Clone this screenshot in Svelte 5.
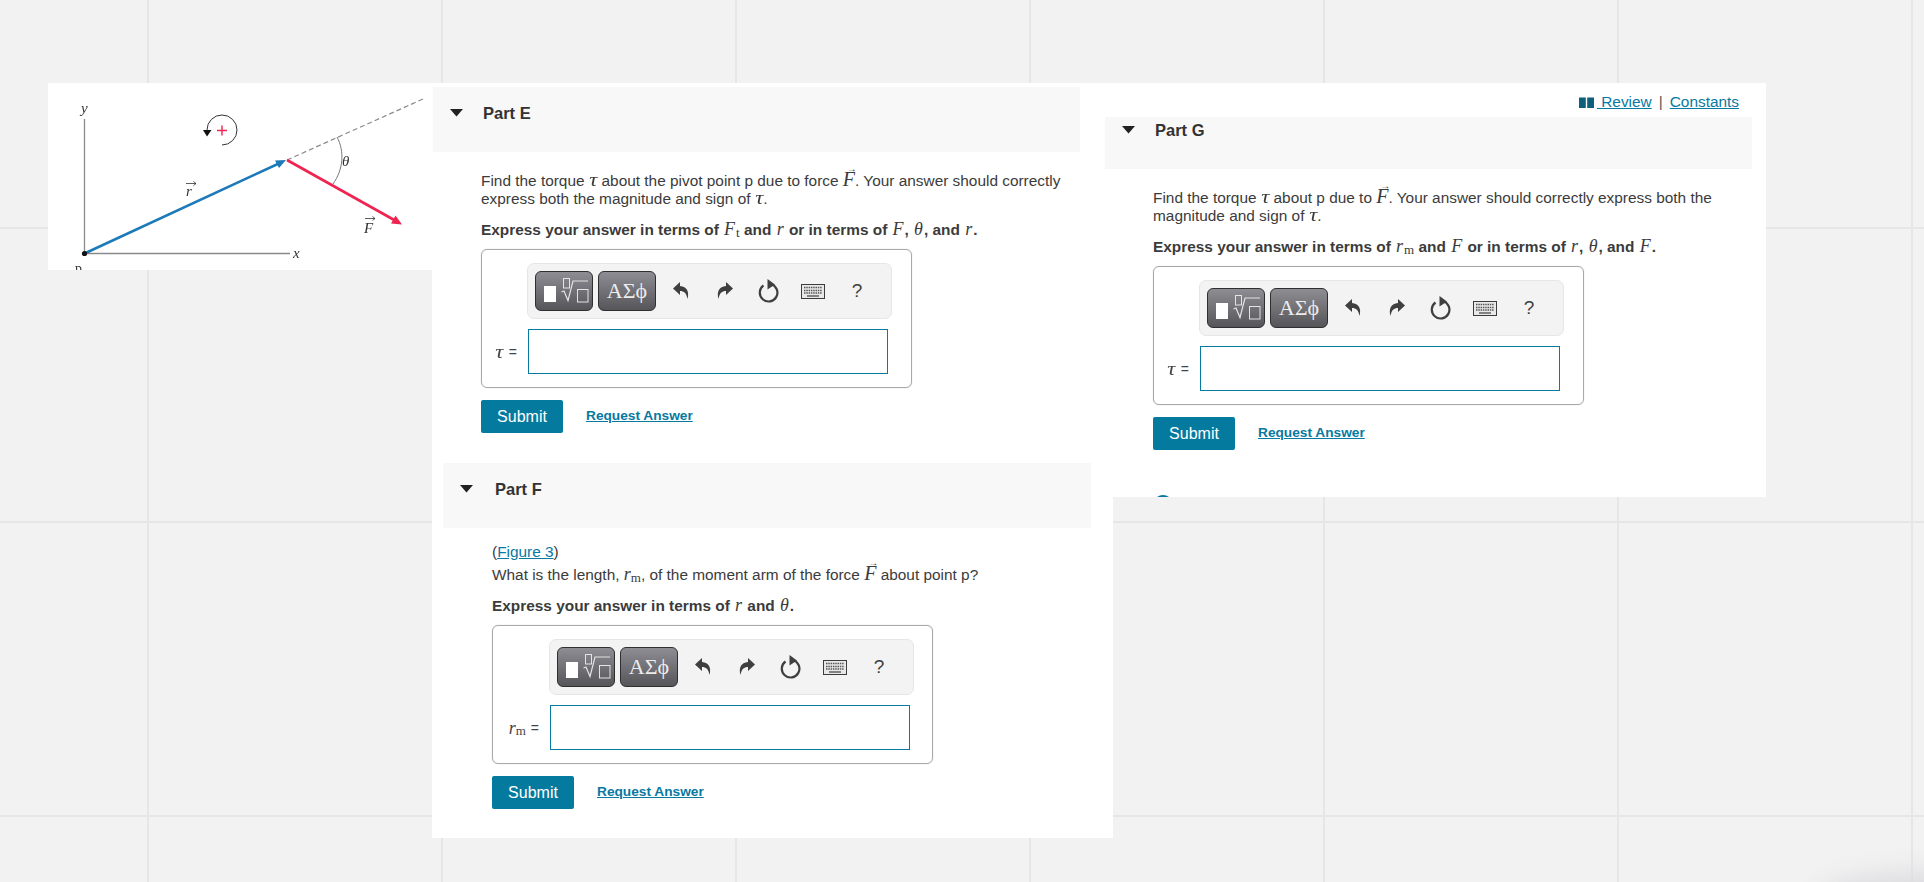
<script>
	const iconColor = '#3f3f3f';
</script>

{#snippet vecF()}<span class="vec"><i class="mi big">F</i></span>{/snippet}
{#snippet tau()}<i class="mi tau">τ</i>{/snippet}
{#snippet rm()}<i class="mi">r</i><span class="sub">m</span>{/snippet}

{#snippet toolbar()}
	<div class="toolbar">
		<button class="tool">
			<svg width="52" height="36" viewBox="0 0 52 36">
				<rect x="6" y="13" width="12" height="16" fill="#fff" />
				<rect x="25.500" y="5.500" width="6" height="9.500" fill="none" stroke="#e4e4e4" />
				<path d="M23.500 19l2.500 -1l4 9.500l5 -19.500h15" fill="none" stroke="#e4e4e4" stroke-width="1.200" />
				<rect x="39.500" y="16.500" width="10.500" height="12.500" fill="none" stroke="#e4e4e4" />
			</svg>
		</button>
		<button class="tool greek">ΑΣϕ</button>
		<span class="slot">
			<svg width="18" height="20" viewBox="0 0 18 20"><path d="M8 1L1 7.500L8 14V10C12 10 14.500 12 15.500 18C17.500 11 15 5.500 8 5Z" fill={iconColor} /></svg>
		</span>
		<span class="slot">
			<svg width="18" height="20" viewBox="0 0 18 20"><path d="M10 1L17 7.500L10 14V10C6 10 3.500 12 2.500 18C0.500 11 3 5.500 10 5Z" fill={iconColor} /></svg>
		</span>
		<span class="slot">
			<svg width="22" height="24" viewBox="0 0 22 24">
				<path d="M13 5.200A8.800 8.800 0 1 1 5.500 6.500" fill="none" stroke={iconColor} stroke-width="2.200" />
				<path d="M9.500 0L17 5.500L9.500 10.500Z" fill={iconColor} />
			</svg>
		</span>
		<span class="slot">
			<svg width="24" height="15" viewBox="0 0 24 15">
				<rect x="0.500" y="0.500" width="23" height="14" fill="#e8e8e8" stroke="#3c3c3c" />
				<path d="M3 3.500h18M3 6.500h18M3 9h18" stroke="#555" stroke-width="1.400" stroke-dasharray="1.500 0.800" />
				<path d="M6 12h12" stroke="#555" stroke-width="1.400" />
			</svg>
		</span>
		<span class="slot help">?</span>
	</div>
{/snippet}

{#snippet answer(label, wide)}
	<div class="answer" class:wide>
		<div></div>
		{@render toolbar()}
		<div class="label">{@render label()} <span class="eq">=</span></div>
		<div class="input"></div>
	</div>
{/snippet}

{#snippet actions()}
	<div class="actions">
		<button class="submit">Submit</button>
		<a class="request" href="#top">Request Answer</a>
	</div>
{/snippet}

{#snippet caret()}
	<svg class="caret" width="13" height="8" viewBox="0 0 13 8"><path d="M0 0H13L6.500 7.500Z" fill="#222" /></svg>
{/snippet}

<div class="canvas">
	<div class="figure">
		<svg width="384" height="187" viewBox="48 83 384 187">
			<path d="M84.500 119V253.500H290" fill="none" stroke="#8a8a8a" stroke-width="1.300" />
			<path d="M287 160L423 99" stroke="#8a8a8a" stroke-width="1.200" stroke-dasharray="5 3" />
			<path d="M337 137C345 152 343 170 333 184" fill="none" stroke="#777" stroke-width="1" />
			<path d="M84.500 253.500L281 162.500" stroke="#1c7ab8" stroke-width="2.600" />
			<path d="M286 160L275 160.500L279 168Z" fill="#1c7ab8" />
			<path d="M287 160L396 221" stroke="#ef2450" stroke-width="2.600" />
			<path d="M402 224.500L391 223.500L395.500 215.500Z" fill="#ef2450" />
			<circle cx="84.500" cy="253.500" r="2.600" fill="#111" />
			<path d="M222 145A15 15 0 1 0 207 130" fill="none" stroke="#333" stroke-width="1" />
			<path d="M203 130H211.500L207 136.500Z" fill="#111" />
			<path d="M222 125.500V135.500M217 130.500H227" stroke="#ef2450" stroke-width="1.400" />
			<g class="fig-text">
				<text x="81" y="113" font-size="15" font-style="italic">y</text>
				<text x="293" y="258" font-size="15" font-style="italic">x</text>
				<text x="75" y="273" font-size="14">p</text>
				<text x="342" y="166" font-size="15" font-style="italic">θ</text>
				<text x="186" y="196" font-size="15" font-style="italic">r</text>
				<path d="M186 183.500H196M193.500 181.500L196 183.500L193.500 185.500" fill="none" stroke="#333" stroke-width="0.800" />
				<text x="364" y="233" font-size="15" font-style="italic">F</text>
				<path d="M365 218.500H375M372.500 216.500L375 218.500L372.500 220.500" fill="none" stroke="#333" stroke-width="0.800" />
			</g>
		</svg>
	</div>

	<div class="window left-window">
		<section class="part part-e">
			<header class="part-head">{@render caret()}<span>Part E</span></header>
			<div class="part-body">
				<p>Find the torque {@render tau()} about the pivot point p due to force {@render vecF()}. Your answer should correctly express both the magnitude and sign of {@render tau()}.</p>
				<p class="instr">Express your answer in terms of <i class="mi">F</i><span class="sub">t</span> and <i class="mi">r</i> or in terms of <i class="mi">F</i>, <i class="mi">θ</i>, and <i class="mi">r</i>.</p>
				{@render answer(tau, false)}
				{@render actions()}
			</div>
		</section>

		<section class="part part-f">
			<header class="part-head">{@render caret()}<span>Part F</span></header>
			<div class="part-body">
				<p class="fig-line">(<a href="#top">Figure 3</a>)</p>
				<p>What is the length, {@render rm()}, of the moment arm of the force {@render vecF()} about point p?</p>
				<p class="instr">Express your answer in terms of <i class="mi">r</i> and <i class="mi">θ</i>.</p>
				{@render answer(rm, true)}
				{@render actions()}
			</div>
		</section>
	</div>

	<div class="window right-window">
		<nav class="links">
			<svg width="15" height="11" viewBox="0 0 15 11"><path d="M0 0.500H6.800V11H0ZM8.200 0.500H15V11H8.200Z" fill="#0d5f7c" /></svg>
			<a href="#top">&nbsp;Review</a><span class="bar">|</span><a href="#top">Constants</a>
		</nav>
		<section class="part part-g">
			<header class="part-head">{@render caret()}<span>Part G</span></header>
			<div class="part-body">
				<p>Find the torque {@render tau()} about p due to {@render vecF()}. Your answer should correctly express both the magnitude and sign of {@render tau()}.</p>
				<p class="instr">Express your answer in terms of {@render rm()} and <i class="mi">F</i> or in terms of <i class="mi">r</i>, <i class="mi">θ</i>, and <i class="mi">F</i>.</p>
				{@render answer(tau, false)}
				{@render actions()}
			</div>
		</section>
		<div class="cut-circle"></div>
	</div>

	<div class="smudge"></div>
</div>

<style>
	:global(body) {
		margin: 0;
		background: #f2f2f2;
	}

	.canvas {
		position: relative;
		height: 882px;
		overflow: hidden;
		background-color: #f2f2f2;
		background-image: linear-gradient(90deg, #e6e6e6 2px, transparent 2px), linear-gradient(#e6e6e6 2px, transparent 2px);
		background-size: 294px 294px;
		background-position: 147px 227px;
		font-family: 'Liberation Sans', Arial, sans-serif;
		font-size: 15.400px;
		color: #3b3b3b;
	}

	.figure {
		position: absolute;
		left: 48px;
		top: 83px;
		width: 384px;
		height: 187px;
		background: #fff;
		overflow: hidden;
	}

	.figure svg {
		display: block;
		filter: blur(0.35px);
	}

	.fig-text text {
		font-family: 'Liberation Serif', serif;
		fill: #333;
	}

	.window {
		position: absolute;
		background: #fff;
	}

	.left-window {
		left: 432px;
		top: 83px;
		width: 681px;
		height: 755px;
		padding-top: 4px;
		box-sizing: border-box;
	}

	.right-window {
		left: 1105px;
		top: 83px;
		width: 661px;
		height: 414px;
		overflow: hidden;
	}

	.links {
		display: flex;
		justify-content: flex-end;
		align-items: center;
		height: 34px;
		padding: 4px 27px 0 0;
		box-sizing: border-box;
	}

	.links svg {
		margin-right: 3px;
	}

	.links a,
	.fig-line a {
		color: #08799f;
	}

	.bar {
		margin: 0 7px;
		color: #555;
	}

	.part-e {
		margin-left: 1px;
		width: 647px;
	}

	.part-f {
		margin: 30px 0 0 11px;
		width: 648px;
	}

	.part-g {
		width: 647px;
	}

	.part-head {
		display: flex;
		align-items: flex-start;
		height: 65px;
		padding: 17px 0 0 17px;
		box-sizing: border-box;
		background: #f8f8f8;
		font-size: 16.500px;
		font-weight: 700;
		line-height: 18px;
		color: #333;
	}

	.part-g .part-head {
		height: 52px;
		padding-top: 4px;
	}

	.caret {
		margin: 5px 20px 0 0;
	}

	.part-f .caret {
		margin-right: 22px;
	}

	.part-body {
		padding: 20px 14px 0 48px;
	}

	.part-f .part-body {
		padding: 15px 14px 0 49px;
	}

	p {
		margin: 0;
		line-height: 18px;
	}

	.fig-line {
		margin-bottom: 5px;
	}

	.instr {
		margin-top: 13px;
		font-weight: 700;
	}

	.mi {
		font-family: 'Liberation Serif', serif;
		font-size: 18px;
		font-weight: 400;
		line-height: 0;
	}

	.instr .mi {
		margin: 0 1px;
	}

	.mi.big {
		font-size: 20px;
	}

	.tau {
		display: inline-block;
		transform: scaleX(1.25);
		margin: 0 1px;
	}

	.sub {
		font-family: 'Liberation Serif', serif;
		font-size: 13px;
		font-weight: 400;
		line-height: 0;
		vertical-align: -2px;
	}

	.vec {
		position: relative;
		line-height: 0;
	}

	.vec::before {
		content: '→';
		position: absolute;
		left: 4px;
		top: -8px;
		font-size: 10px;
		line-height: 10px;
		color: #333;
	}

	.answer {
		display: grid;
		grid-template-columns: 45px 1fr;
		grid-template-rows: 56px 45px;
		row-gap: 10px;
		margin-top: 10px;
		width: 431px;
		height: 139px;
		padding-top: 13px;
		border: 1px solid #a8a8a8;
		box-shadow: 0 0 1px #b8b8b8;
		border-radius: 6px;
		box-sizing: border-box;
	}

	.answer.wide {
		grid-template-columns: 56px 1fr;
		width: 441px;
	}

	.toolbar {
		display: flex;
		align-items: center;
		box-sizing: border-box;
		width: 365px;
		height: 56px;
		padding-left: 7px;
		background: #f3f3f3;
		border: 1px solid #e6e6e6;
		border-radius: 7px;
	}

	.tool {
		display: flex;
		align-items: center;
		justify-content: center;
		box-sizing: border-box;
		width: 58px;
		height: 40px;
		margin-right: 5px;
		padding: 0;
		background: linear-gradient(#8d8d93, #55555a);
		border: 1px solid #2f2f2f;
		border-radius: 6px;
	}

	.greek {
		margin-right: 3px;
		font-family: 'Liberation Serif', serif;
		font-size: 22px;
		color: #ececec;
	}

	.slot {
		display: flex;
		align-items: center;
		justify-content: center;
		width: 44px;
	}

	.help {
		font-size: 19px;
		color: #3f3f3f;
	}

	.label {
		display: flex;
		align-items: center;
		justify-content: flex-end;
		gap: 5px;
		padding-right: 10px;
		white-space: nowrap;
		color: #444;
		font-size: 14px;
	}

	.label :global(.sub) {
		margin-left: -5px;
		padding-top: 6px;
	}

	.input {
		box-sizing: border-box;
		width: 360px;
		height: 45px;
		margin-left: 1px;
		border: 1px solid #08799f;
		background: #fff;
	}

	.actions {
		display: flex;
		align-items: center;
		gap: 23px;
		margin-top: 12px;
	}

	.submit {
		width: 82px;
		height: 33px;
		padding: 0;
		background: #057a9f;
		border: 0;
		border-radius: 2px;
		font-family: inherit;
		font-size: 16px;
		color: #fff;
	}

	.request {
		font-size: 13.700px;
		font-weight: 700;
		color: #08799f;
		margin-top: -3px;
	}

	.cut-circle {
		position: absolute;
		left: 48px;
		top: 412px;
		width: 20px;
		height: 20px;
		border-radius: 50%;
		background: #057a9f;
	}

	.smudge {
		position: absolute;
		left: 1820px;
		top: 872px;
		width: 220px;
		height: 50px;
		border-radius: 50%;
		background: #dcdce0;
		filter: blur(12px);
	}
</style>
